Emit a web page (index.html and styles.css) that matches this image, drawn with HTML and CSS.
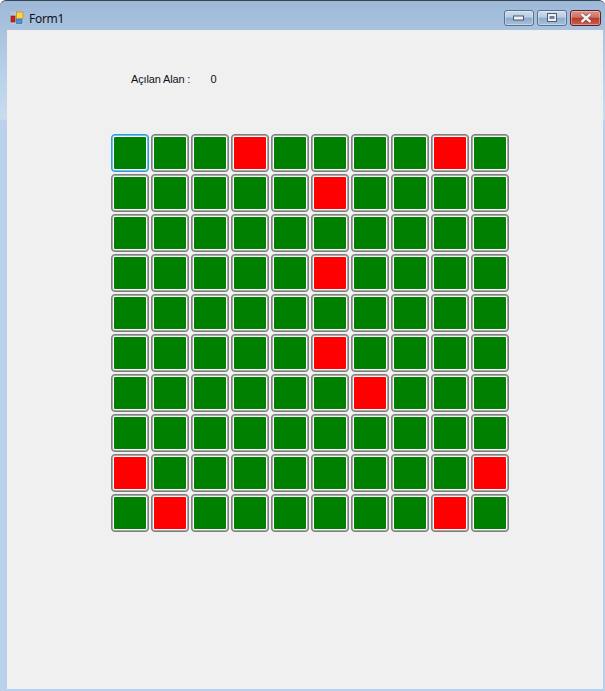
FILE: index.html
```html
<!DOCTYPE html>
<html lang="tr">
<head>
<meta charset="utf-8">
<title>Form1</title>
<link rel="stylesheet" href="styles.css">
</head>
<body>
<div class="window">
  <header class="titlebar">
    <svg class="app-icon" width="14" height="14" viewBox="0 0 14 14">
      <rect x="0.5" y="0.5" width="13" height="13" fill="#c9ccd6" opacity="0.55"/>
      <rect x="1" y="5" width="4" height="6" fill="#c8231c" stroke="#7c1a16" stroke-width="0.6"/>
      <rect x="6.5" y="1" width="6.5" height="6.5" fill="#fbd24a" stroke="#b98a1e" stroke-width="0.7"/>
      <rect x="6.5" y="8.5" width="5.5" height="4" fill="#4c8fe0" stroke="#2f66ad" stroke-width="0.6"/>
    </svg>
    <span class="title">Form1</span>
    <div class="controls">
      <div class="ctl">
        <svg width="12" height="6" viewBox="0 0 12 6"><rect x="0.5" y="1" width="10" height="4" fill="#eef2f7" stroke="#4a5a70"/></svg>
      </div>
      <div class="ctl">
        <svg width="12" height="10" viewBox="0 0 12 10"><rect x="1.5" y="0.5" width="9" height="8" fill="#eef2f7" stroke="#4a5a70"/><rect x="3.5" y="3" width="5" height="3" fill="#6f8199"/></svg>
      </div>
      <div class="ctl close">
        <svg width="14" height="10" viewBox="0 0 14 10"><path d="M2.5 1 L11.5 9 M11.5 1 L2.5 9" stroke="#6b3a3a" stroke-width="3.6"/><path d="M2.5 1 L11.5 9 M11.5 1 L2.5 9" stroke="#f4f1f1" stroke-width="2.4"/></svg>
      </div>
    </div>
  </header>
  <main class="client">
    <div class="status">
      <span class="status-label">Açılan Alan :</span>
      <span class="status-value">0</span>
    </div>
    <div class="board">
      <div class="cell focus"></div><div class="cell"></div><div class="cell"></div><div class="cell mine"></div><div class="cell"></div><div class="cell"></div><div class="cell"></div><div class="cell"></div><div class="cell mine"></div><div class="cell"></div>
      <div class="cell"></div><div class="cell"></div><div class="cell"></div><div class="cell"></div><div class="cell"></div><div class="cell mine"></div><div class="cell"></div><div class="cell"></div><div class="cell"></div><div class="cell"></div>
      <div class="cell"></div><div class="cell"></div><div class="cell"></div><div class="cell"></div><div class="cell"></div><div class="cell"></div><div class="cell"></div><div class="cell"></div><div class="cell"></div><div class="cell"></div>
      <div class="cell"></div><div class="cell"></div><div class="cell"></div><div class="cell"></div><div class="cell"></div><div class="cell mine"></div><div class="cell"></div><div class="cell"></div><div class="cell"></div><div class="cell"></div>
      <div class="cell"></div><div class="cell"></div><div class="cell"></div><div class="cell"></div><div class="cell"></div><div class="cell"></div><div class="cell"></div><div class="cell"></div><div class="cell"></div><div class="cell"></div>
      <div class="cell"></div><div class="cell"></div><div class="cell"></div><div class="cell"></div><div class="cell"></div><div class="cell mine"></div><div class="cell"></div><div class="cell"></div><div class="cell"></div><div class="cell"></div>
      <div class="cell"></div><div class="cell"></div><div class="cell"></div><div class="cell"></div><div class="cell"></div><div class="cell"></div><div class="cell mine"></div><div class="cell"></div><div class="cell"></div><div class="cell"></div>
      <div class="cell"></div><div class="cell"></div><div class="cell"></div><div class="cell"></div><div class="cell"></div><div class="cell"></div><div class="cell"></div><div class="cell"></div><div class="cell"></div><div class="cell"></div>
      <div class="cell mine"></div><div class="cell"></div><div class="cell"></div><div class="cell"></div><div class="cell"></div><div class="cell"></div><div class="cell"></div><div class="cell"></div><div class="cell"></div><div class="cell mine"></div>
      <div class="cell"></div><div class="cell mine"></div><div class="cell"></div><div class="cell"></div><div class="cell"></div><div class="cell"></div><div class="cell"></div><div class="cell"></div><div class="cell mine"></div><div class="cell"></div>
    </div>
  </main>
</div>
</body>
</html>
```
FILE: styles.css
```css
html, body {
  margin: 0;
  height: 100%;
  overflow: hidden;
  background: #fff;
}
.window {
  height: 691px;
  box-sizing: border-box;
  display: flex;
  flex-direction: column;
  border-top: 1px solid #3a4350;
  border-radius: 6px 6px 0 0;
  background:
    linear-gradient(180deg, #9db9d8 0, #a9c3de 30px, #b7cfe9 70px, #c9dcef 118px, #b9d1ec 120px, #b9d1ec 100%);
  font-family: "Liberation Sans", Arial, sans-serif;
}
.titlebar {
  height: 29px;
  flex: none;
  display: flex;
  align-items: center;
  box-sizing: border-box;
  padding: 5px 4px 0 10px;
}
.app-icon {
  flex: none;
}
.title {
  margin-left: 5px;
  font-family: "Noto Sans", "Open Sans", sans-serif;
  font-size: 12px;
  letter-spacing: -0.3px;
  color: #10101a;
}
.controls {
  margin-left: auto;
  display: flex;
  gap: 3px;
  align-items: center;
}
.ctl {
  width: 30px;
  height: 16px;
  box-sizing: border-box;
  border: 1px solid #5a6f8e;
  border-radius: 3px;
  display: flex;
  align-items: center;
  justify-content: center;
  background: linear-gradient(180deg, #cfdeee 0, #b6cbe2 45%, #8ea9c8 50%, #a9c1da 100%);
  box-shadow: inset 0 0 0 1px rgba(255, 255, 255, 0.35);
}
.close {
  width: 31px;
  border-color: #5e1f26;
  background: linear-gradient(180deg, #dc9285 0, #cf7466 45%, #b8382a 50%, #c9604c 100%);
}
.client {
  flex: 1;
  margin: 0 2px 2px 7px;
  background: #f0f0f0;
  display: flex;
  flex-direction: column;
  min-height: 0;
}
.status {
  display: flex;
  margin: 43px 0 0 124px;
  font-size: 11px;
  line-height: 13px;
  letter-spacing: -0.15px;
  color: #10101c;
}
.status-label {
  width: 79.5px;
}
.board {
  margin: 48px 0 0 104px;
  display: grid;
  grid-template-columns: repeat(10, 38px);
  grid-auto-rows: 38px;
  gap: 2px;
}
.cell {
  box-sizing: border-box;
  border: 1px solid #7f7f7f;
  border-radius: 4px;
  background: #008000;
  box-shadow: inset 0 0 0 1px #a8a8a8, inset 0 0 0 2px #fff;
}
.mine {
  background-color: #ff0000;
}
.focus {
  border-color: #2f9bd8;
  box-shadow: inset 0 0 0 1px #6fc0ea, inset 0 0 0 2px #fff;
}
```
